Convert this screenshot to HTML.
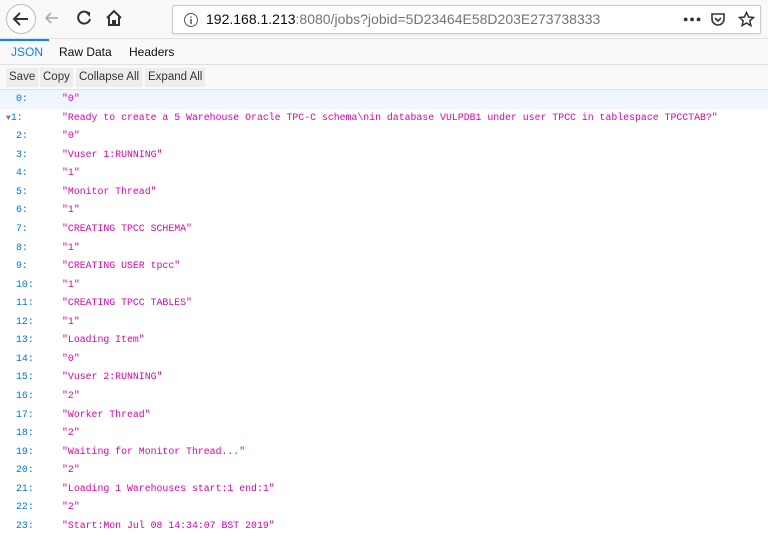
<!DOCTYPE html><html><head><style>
body{margin:0;width:768px;height:536px;overflow:hidden;background:#fff;font-family:"Liberation Sans",sans-serif}
.top{height:38px;background:#f9f9fa;position:relative;border-bottom:1px solid #e0e0e2}
.back{position:absolute;left:6px;top:4px;width:28px;height:28px;border:1px solid #bbb;border-radius:50%;background:#fff}
.url{position:absolute;left:172px;top:5px;width:587px;height:27px;border:1px solid #ccc;border-radius:2px;background:#fff;box-shadow:0 1px 2px rgba(0,0,0,.08)}
.url span.t{position:absolute;left:33px;top:5px;font-size:14px;color:#0c0c0d}
.g{color:#737373}
.tabs{height:25px;background:#f9f9fa;position:relative;border-bottom:1px solid #e0e0e2}
.tabs span{position:absolute;top:6px;font-size:12px;color:#0c0c0d}
.tabs .a{position:absolute;left:0;top:0;width:49px;height:2px;background:#0a84ff}
.bar{height:24px;background:#f9f9fa;border-bottom:1px solid #e0e0e2;position:relative}
.bar span{position:absolute;top:3px;height:19px;line-height:19px;background:#ededf0;font-size:11.5px;color:#333;padding:0 3px}
.rows{font-family:"Liberation Mono",monospace;font-size:9.85px}
.r{height:18.57px;line-height:18.57px;position:relative}
.r b{font-weight:normal;position:absolute;left:16px;color:#0074e8}
.r i{font-style:normal;position:absolute;left:62px;color:#dd00a9;white-space:pre}
.hl{background:#f0f6fe}
</style></head><body>
<div class="top">
<div class="back"><svg width="28" height="28" viewBox="0 0 28 28"><path d="M21 14H8M13 8l-6 6 6 6" stroke="#333" stroke-width="2" fill="none"/></svg></div>
<svg style="position:absolute;left:42px;top:8px" width="20" height="20"><path d="M16 10H4M9 5l-5 5 5 5" stroke="#aaa" stroke-width="1.6" fill="none"/></svg>
<svg style="position:absolute;left:74px;top:8px" width="20" height="20"><path d="M15 6A6 6 0 1 0 16 11" stroke="#333" stroke-width="2" fill="none"/><path d="M11 4h5v5z" fill="#333"/></svg>
<svg style="position:absolute;left:104px;top:8px" width="20" height="20"><path d="M3 10l7-7 7 7M5 9v8h4v-4h2v4h4V9" stroke="#333" stroke-width="2" fill="none"/></svg>
<div class="url"><svg style="position:absolute;left:10px;top:6px" width="16" height="16"><circle cx="8" cy="8" r="6.5" stroke="#555" fill="none"/><path d="M8 7v5M8 4.5v1.2" stroke="#555" stroke-width="1.5"/></svg>
<span class="t">192.168.1.213<span class="g">:8080/jobs?jobid=5D23464E58D203E273738333</span></span>
<span style="position:absolute;left:510px;top:8px;font-size:9px;color:#333;letter-spacing:1px">●●●</span>
<svg style="position:absolute;left:537px;top:6px" width="16" height="16"><path d="M2 2h12v5a6 6 0 0 1-12 0z" stroke="#333" stroke-width="1.6" fill="none"/><path d="M5 6l3 3 3-3" stroke="#333" stroke-width="1.6" fill="none"/></svg>
<svg style="position:absolute;left:565px;top:5px" width="17" height="17"><path d="M8.5 1.5l2.1 4.5 4.9.5-3.7 3.3 1.1 4.8-4.4-2.6-4.4 2.6 1.1-4.8L1.5 6.5l4.9-.5z" stroke="#333" stroke-width="1.5" fill="none"/></svg>
</div></div>
<div class="tabs"><div class="a"></div><span style="left:11px;color:#0a84ff">JSON</span><span style="left:59px">Raw Data</span><span style="left:129px">Headers</span></div>
<div class="bar"><span style="left:6px">Save</span><span style="left:40px">Copy</span><span style="left:76px">Collapse All</span><span style="left:145px">Expand All</span></div>
<div class="rows">
<div class="r hl"><b>0:</b><i>"0"</i></div>
<div class="r"><b style="left:6px"><span style="color:#777;font-size:8px">▼</span>1:</b><i>"Ready to create a 5 Warehouse Oracle TPC-C schema\nin database VULPDB1 under user TPCC in tablespace TPCCTAB?"</i></div>
<div class="r"><b>2:</b><i>"0"</i></div>
<div class="r"><b>3:</b><i>"Vuser 1:RUNNING"</i></div>
<div class="r"><b>4:</b><i>"1"</i></div>
<div class="r"><b>5:</b><i>"Monitor Thread"</i></div>
<div class="r"><b>6:</b><i>"1"</i></div>
<div class="r"><b>7:</b><i>"CREATING TPCC SCHEMA"</i></div>
<div class="r"><b>8:</b><i>"1"</i></div>
<div class="r"><b>9:</b><i>"CREATING USER tpcc"</i></div>
<div class="r"><b>10:</b><i>"1"</i></div>
<div class="r"><b>11:</b><i>"CREATING TPCC TABLES"</i></div>
<div class="r"><b>12:</b><i>"1"</i></div>
<div class="r"><b>13:</b><i>"Loading Item"</i></div>
<div class="r"><b>14:</b><i>"0"</i></div>
<div class="r"><b>15:</b><i>"Vuser 2:RUNNING"</i></div>
<div class="r"><b>16:</b><i>"2"</i></div>
<div class="r"><b>17:</b><i>"Worker Thread"</i></div>
<div class="r"><b>18:</b><i>"2"</i></div>
<div class="r"><b>19:</b><i>"Waiting for Monitor Thread..."</i></div>
<div class="r"><b>20:</b><i>"2"</i></div>
<div class="r"><b>21:</b><i>"Loading 1 Warehouses start:1 end:1"</i></div>
<div class="r"><b>22:</b><i>"2"</i></div>
<div class="r"><b>23:</b><i>"Start:Mon Jul 08 14:34:07 BST 2019"</i></div>
</div>
</body></html>
